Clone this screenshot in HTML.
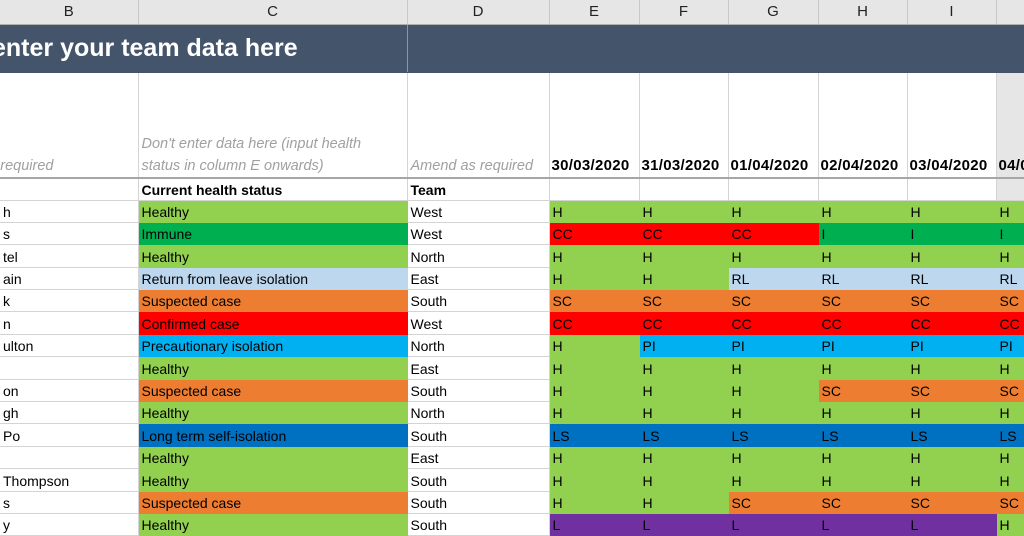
<!DOCTYPE html>
<html><head><meta charset="utf-8"><style>
*{margin:0;padding:0;box-sizing:border-box}
body{width:1024px;height:536px;overflow:hidden;background:#fff;font-family:"Liberation Sans",sans-serif;font-size:14px;color:#000;position:relative}
table{border-collapse:collapse;table-layout:fixed;position:absolute;left:0;top:0;width:1040px}
td{border-right:1px solid #d4d4d4;border-bottom:1px solid #d4d4d4;white-space:nowrap;overflow:hidden;padding:0 3px;vertical-align:bottom;line-height:20px}
tr.hd td{background:#e6e6e6;text-align:center;vertical-align:middle;font-size:15px;color:#222;border-right:1px solid #c8c8c8;border-bottom:1px solid #b0b0b0;height:24px}
tr.tt td{background:#44546a;border-color:#44546a;height:48px;color:#fff;font-weight:bold;font-size:25px;vertical-align:middle}
tr.tl td{height:106px;border-bottom:2px solid #a6a6a6;color:#a0a0a0;font-style:italic;font-size:14.5px;line-height:22px}
tr.tl td.d{color:#000;font-style:normal;font-weight:bold;font-size:15px;padding:0 2px;letter-spacing:0.3px}
tr.sh td{height:22px;font-weight:bold}
tr.r td{height:22.4px}
.g{background:#92d050;border-color:#92d050!important}
.dg{background:#00b050;border-color:#00b050!important}
.rd{background:#ff0000;border-color:#ff0000!important}
.lb{background:#bdd7ee;border-color:#bdd7ee!important}
.o{background:#ed7d31;border-color:#ed7d31!important}
.c{background:#00b0f0;border-color:#00b0f0!important}
.b{background:#0070c0;border-color:#0070c0!important}
.p{background:#7030a0;border-color:#7030a0!important}
.j{background:#e6e6e6}
</style></head><body>
<table>
<colgroup><col style="width:138px"><col style="width:269px"><col style="width:142px"><col style="width:90px"><col style="width:89px"><col style="width:90px"><col style="width:89px"><col style="width:89px"><col style="width:44px"></colgroup>
<tr class="hd"><td>B</td><td>C</td><td>D</td><td>E</td><td>F</td><td>G</td><td>H</td><td>I</td><td></td></tr>
<tr class="tt"><td colspan="2" style="padding-left:0;text-indent:-8px;border-right:1px solid #8a96a6">enter your team data here</td><td></td><td></td><td></td><td></td><td></td><td></td><td></td></tr>
<tr class="tl"><td style="text-indent:-14px">s required</td><td>Don't enter data here (input health<br>status in column E onwards)</td><td>Amend as required</td><td class="d">30/03/2020</td><td class="d">31/03/2020</td><td class="d">01/04/2020</td><td class="d">02/04/2020</td><td class="d">03/04/2020</td><td class="d j">04/04/2020</td></tr>
<tr class="sh"><td></td><td>Current health status</td><td>Team</td><td></td><td></td><td></td><td></td><td></td><td class="j"></td></tr>
<tr class="r"><td>h</td><td class="g">Healthy</td><td>West</td><td class="g">H</td><td class="g">H</td><td class="g">H</td><td class="g">H</td><td class="g">H</td><td class="g">H</td></tr>
<tr class="r"><td>s</td><td class="dg">Immune</td><td>West</td><td class="rd">CC</td><td class="rd">CC</td><td class="rd">CC</td><td class="dg">I</td><td class="dg">I</td><td class="dg">I</td></tr>
<tr class="r"><td>tel</td><td class="g">Healthy</td><td>North</td><td class="g">H</td><td class="g">H</td><td class="g">H</td><td class="g">H</td><td class="g">H</td><td class="g">H</td></tr>
<tr class="r"><td>ain</td><td class="lb">Return from leave isolation</td><td>East</td><td class="g">H</td><td class="g">H</td><td class="lb">RL</td><td class="lb">RL</td><td class="lb">RL</td><td class="lb">RL</td></tr>
<tr class="r"><td>k</td><td class="o">Suspected case</td><td>South</td><td class="o">SC</td><td class="o">SC</td><td class="o">SC</td><td class="o">SC</td><td class="o">SC</td><td class="o">SC</td></tr>
<tr class="r"><td>n</td><td class="rd">Confirmed case</td><td>West</td><td class="rd">CC</td><td class="rd">CC</td><td class="rd">CC</td><td class="rd">CC</td><td class="rd">CC</td><td class="rd">CC</td></tr>
<tr class="r"><td>ulton</td><td class="c">Precautionary isolation</td><td>North</td><td class="g">H</td><td class="c">PI</td><td class="c">PI</td><td class="c">PI</td><td class="c">PI</td><td class="c">PI</td></tr>
<tr class="r"><td></td><td class="g">Healthy</td><td>East</td><td class="g">H</td><td class="g">H</td><td class="g">H</td><td class="g">H</td><td class="g">H</td><td class="g">H</td></tr>
<tr class="r"><td>on</td><td class="o">Suspected case</td><td>South</td><td class="g">H</td><td class="g">H</td><td class="g">H</td><td class="o">SC</td><td class="o">SC</td><td class="o">SC</td></tr>
<tr class="r"><td>gh</td><td class="g">Healthy</td><td>North</td><td class="g">H</td><td class="g">H</td><td class="g">H</td><td class="g">H</td><td class="g">H</td><td class="g">H</td></tr>
<tr class="r"><td>Po</td><td class="b">Long term self-isolation</td><td>South</td><td class="b">LS</td><td class="b">LS</td><td class="b">LS</td><td class="b">LS</td><td class="b">LS</td><td class="b">LS</td></tr>
<tr class="r"><td></td><td class="g">Healthy</td><td>East</td><td class="g">H</td><td class="g">H</td><td class="g">H</td><td class="g">H</td><td class="g">H</td><td class="g">H</td></tr>
<tr class="r"><td>Thompson</td><td class="g">Healthy</td><td>South</td><td class="g">H</td><td class="g">H</td><td class="g">H</td><td class="g">H</td><td class="g">H</td><td class="g">H</td></tr>
<tr class="r"><td>s</td><td class="o">Suspected case</td><td>South</td><td class="g">H</td><td class="g">H</td><td class="o">SC</td><td class="o">SC</td><td class="o">SC</td><td class="o">SC</td></tr>
<tr class="r"><td>y</td><td class="g">Healthy</td><td>South</td><td class="p">L</td><td class="p">L</td><td class="p">L</td><td class="p">L</td><td class="p">L</td><td class="g">H</td></tr>
</table>
</body></html>
